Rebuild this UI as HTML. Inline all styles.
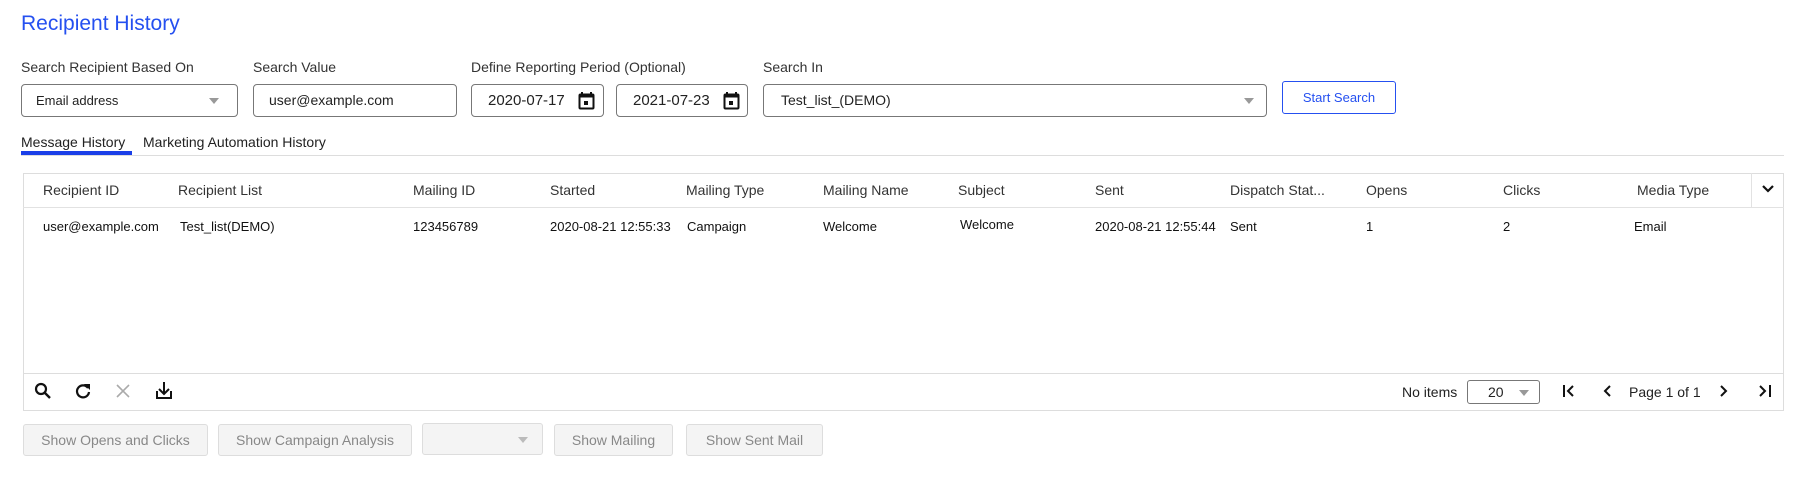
<!DOCTYPE html>
<html><head><meta charset="utf-8"><style>
*{box-sizing:border-box;margin:0;padding:0}
body{width:1805px;height:477px;background:#fff;font-family:"Liberation Sans",sans-serif;color:#222;position:relative;overflow:hidden}
.a{position:absolute;white-space:nowrap}
.lbl{font-size:14px;color:#333;top:59px}
.box{position:absolute;border:1px solid #777;border-radius:4px;top:84px;height:33px;background:#fff;font-size:14px;line-height:31px}
.arr{position:absolute;width:0;height:0;border-left:5px solid transparent;border-right:5px solid transparent;border-top:6px solid #999;top:13px}
.th{font-size:14px;color:#333;top:182px}
.td{font-size:13px;color:#111;top:219px}
.btn{position:absolute;top:424px;height:32px;border:1px solid #ddd;border-radius:3px;background:#f4f4f4;color:#888;font-size:14px;line-height:30px;text-align:center}
</style></head><body>
<div class="a" style="left:21px;top:12px;font-size:21px;color:#2550f0">Recipient History</div>

<div class="a lbl" style="left:21px">Search Recipient Based On</div>
<div class="a lbl" style="left:253px">Search Value</div>
<div class="a lbl" style="left:471px">Define Reporting Period (Optional)</div>
<div class="a lbl" style="left:763px">Search In</div>

<div class="box" style="left:21px;width:217px;padding-left:14px;font-size:13px">Email address<div class="arr" style="left:187px"></div></div>
<div class="box" style="left:253px;width:204px;padding-left:15px">user@example.com</div>
<div class="box" style="left:471px;width:133px;padding-left:16px;font-size:15px">2020-07-17
<svg style="position:absolute;left:106px;top:6px" width="18" height="19" viewBox="0 0 18 19"><rect x="3" y="1" width="2" height="4" fill="#111"/><rect x="12" y="1" width="2" height="4" fill="#111"/><rect x="1.5" y="3.5" width="14" height="14" rx="1" fill="none" stroke="#111" stroke-width="2"/><rect x="1.5" y="3.5" width="14" height="3" fill="#111"/><rect x="6" y="10" width="4" height="4" fill="#111"/></svg></div>
<div class="box" style="left:616px;width:132px;padding-left:16px;font-size:15px">2021-07-23
<svg style="position:absolute;left:106px;top:6px" width="18" height="19" viewBox="0 0 18 19"><rect x="3" y="1" width="2" height="4" fill="#111"/><rect x="12" y="1" width="2" height="4" fill="#111"/><rect x="1.5" y="3.5" width="14" height="14" rx="1" fill="none" stroke="#111" stroke-width="2"/><rect x="1.5" y="3.5" width="14" height="3" fill="#111"/><rect x="6" y="10" width="4" height="4" fill="#111"/></svg></div>
<div class="box" style="left:763px;width:504px;padding-left:17px">Test_list_(DEMO)<div class="arr" style="left:480px"></div></div>
<div class="a" style="left:1282px;top:81px;width:114px;height:33px;border:1px solid #2550f0;border-radius:3px;color:#2550f0;font-size:13px;line-height:31px;text-align:center">Start Search</div>

<div class="a" style="left:21px;top:134px;font-size:14px;color:#222">Message History</div>
<div class="a" style="left:143px;top:134px;font-size:14px;color:#222">Marketing Automation History</div>
<div class="a" style="left:21px;top:155px;width:1763px;height:1px;background:#ddd"></div>
<div class="a" style="left:21px;top:151px;width:111px;height:4px;background:#1a3fe8"></div>

<div class="a" style="left:23px;top:173px;width:1761px;height:238px;border:1px solid #ddd"></div>
<div class="a" style="left:23px;top:207px;width:1761px;height:1px;background:#e2e2e2"></div>
<div class="a" style="left:23px;top:373px;width:1761px;height:1px;background:#ddd"></div>
<div class="a" style="left:1751px;top:173px;width:1px;height:34px;background:#e2e2e2"></div>
<svg class="a" style="left:1761px;top:184px" width="14" height="10" viewBox="0 0 14 10"><path d="M2 2 L7 7 L12 2" fill="none" stroke="#111" stroke-width="2.2"/></svg>

<div class="a th" style="left:43px">Recipient ID</div>
<div class="a th" style="left:178px">Recipient List</div>
<div class="a th" style="left:413px">Mailing ID</div>
<div class="a th" style="left:550px">Started</div>
<div class="a th" style="left:686px">Mailing Type</div>
<div class="a th" style="left:823px">Mailing Name</div>
<div class="a th" style="left:958px">Subject</div>
<div class="a th" style="left:1095px">Sent</div>
<div class="a th" style="left:1230px">Dispatch Stat...</div>
<div class="a th" style="left:1366px">Opens</div>
<div class="a th" style="left:1503px">Clicks</div>
<div class="a th" style="left:1637px">Media Type</div>

<div class="a td" style="left:43px">user@example.com</div>
<div class="a td" style="left:180px">Test_list(DEMO)</div>
<div class="a td" style="left:413px">123456789</div>
<div class="a td" style="left:550px">2020-08-21 12:55:33</div>
<div class="a td" style="left:687px">Campaign</div>
<div class="a td" style="left:823px">Welcome</div>
<div class="a td" style="left:960px;top:217px">Welcome</div>
<div class="a td" style="left:1095px">2020-08-21 12:55:44</div>
<div class="a td" style="left:1230px">Sent</div>
<div class="a td" style="left:1366px">1</div>
<div class="a td" style="left:1503px">2</div>
<div class="a td" style="left:1634px">Email</div>

<svg class="a" style="left:34px;top:382px" width="18" height="18" viewBox="0 0 18 18"><circle cx="7" cy="7" r="5" fill="none" stroke="#111" stroke-width="2.2"/><path d="M10.5 10.5 L16 16" stroke="#111" stroke-width="2.4"/></svg>
<svg class="a" style="left:74px;top:382px" width="18" height="18" viewBox="0 0 18 18"><path d="M14 6 A6 6 0 1 0 15 10" fill="none" stroke="#111" stroke-width="2.2"/><path d="M10 2 L16 2 L16 8 Z" fill="#111"/></svg>
<svg class="a" style="left:115px;top:383px" width="16" height="16" viewBox="0 0 16 16"><path d="M2 2 L14 14 M14 2 L2 14" stroke="#aaa" stroke-width="1.6"/></svg>
<svg class="a" style="left:155px;top:381px" width="18" height="19" viewBox="0 0 18 19"><path d="M9 1 V12 M4 8 L9 13 L14 8" fill="none" stroke="#111" stroke-width="2"/><path d="M2 10 V17 H16 V10" fill="none" stroke="#111" stroke-width="2"/></svg>

<div class="a" style="left:1402px;top:384px;font-size:14px;color:#222">No items</div>
<div class="a" style="left:1467px;top:380px;width:73px;height:24px;border:1px solid #777;border-radius:3px;font-size:14px;line-height:22px;padding-left:20px">20<div class="arr" style="left:51px;top:9px"></div></div>
<svg class="a" style="left:1562px;top:384px" width="14" height="14" viewBox="0 0 14 14"><path d="M2 1 V13" stroke="#111" stroke-width="2"/><path d="M11 2 L6 7 L11 12" fill="none" stroke="#111" stroke-width="2"/></svg>
<svg class="a" style="left:1601px;top:384px" width="12" height="14" viewBox="0 0 12 14"><path d="M9 2 L4 7 L9 12" fill="none" stroke="#111" stroke-width="2"/></svg>
<div class="a" style="left:1629px;top:384px;font-size:14px;color:#222">Page 1 of 1</div>
<svg class="a" style="left:1718px;top:384px" width="12" height="14" viewBox="0 0 12 14"><path d="M3 2 L8 7 L3 12" fill="none" stroke="#111" stroke-width="2"/></svg>
<svg class="a" style="left:1758px;top:384px" width="14" height="14" viewBox="0 0 14 14"><path d="M2 2 L7 7 L2 12" fill="none" stroke="#111" stroke-width="2"/><path d="M12 1 V13" stroke="#111" stroke-width="2"/></svg>

<div class="btn" style="left:23px;width:185px">Show Opens and Clicks</div>
<div class="btn" style="left:218px;width:194px">Show Campaign Analysis</div>
<div class="btn" style="left:422px;width:121px;top:423px"><div class="arr" style="left:95px;top:13px;border-top-color:#bbb"></div></div>
<div class="btn" style="left:554px;width:119px">Show Mailing</div>
<div class="btn" style="left:686px;width:137px">Show Sent Mail</div>
</body></html>
